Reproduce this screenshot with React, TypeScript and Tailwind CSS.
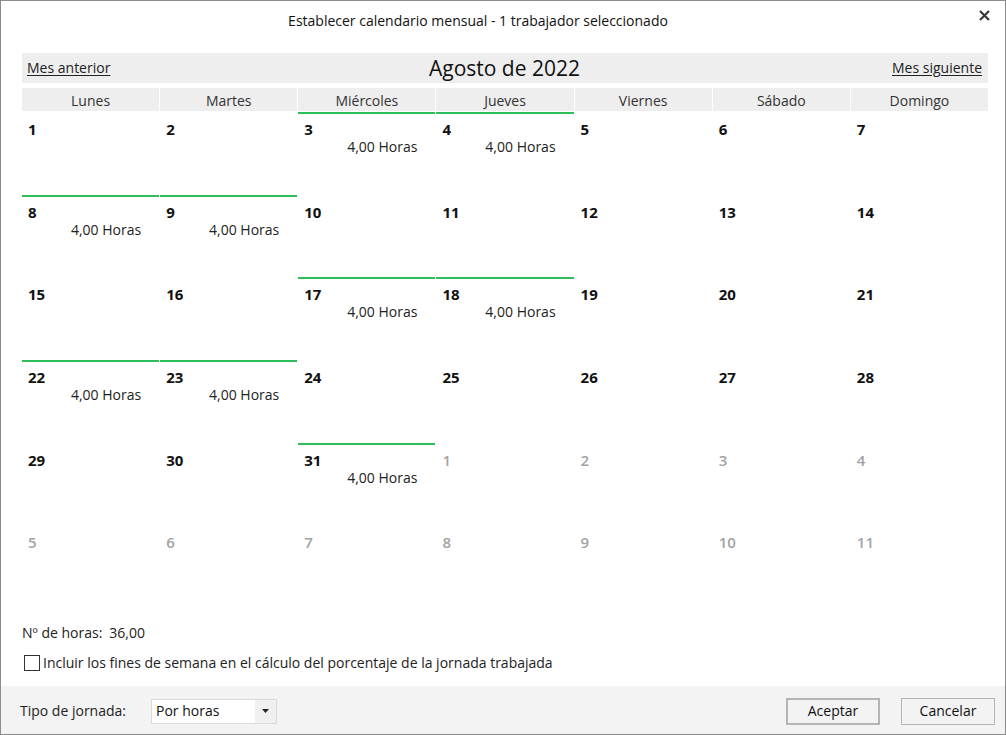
import React from "react";

const dayNames = ["Lunes", "Martes", "Miércoles", "Jueves", "Viernes", "Sábado", "Domingo"];

// August 2022 starts on Monday; 6 weeks shown
const hoursDays = [3, 4, 8, 9, 17, 18, 22, 23, 31];

type Cell = { day: number; current: boolean; hours?: string };

const buildCells = (): Cell[] => {
  const cells: Cell[] = [];
  for (let d = 1; d <= 31; d++) {
    cells.push({ day: d, current: true, hours: hoursDays.includes(d) ? "4,00 Horas" : undefined });
  }
  let next = 1;
  while (cells.length < 42) {
    cells.push({ day: next++, current: false });
  }
  return cells;
};

export default function App() {
  const cells = buildCells();

  return (
    <div
      className="w-[1006px] h-[735px] bg-white border border-[#8c8c8c] flex flex-col text-[#1a1a1a] overflow-hidden text-[14px] leading-[18px]"
      style={{ fontFamily: '"Open Sans", "Noto Sans", sans-serif' }}
    >
      {/* Title bar */}
      <div className="relative h-[39px] flex items-center justify-center pt-px pr-[50px]">
        <span className="text-[#111]">
          Establecer calendario mensual - 1 trabajador seleccionado
        </span>
        <svg className="absolute right-[15px] top-[9px]" width="11" height="11" viewBox="0 0 11 11">
          <path d="M1 1 L10 10 M10 1 L1 10" stroke="#3a3a3a" strokeWidth="2.2" />
        </svg>
      </div>

      <div className="flex flex-col pl-[21px] pr-[17px]">
        {/* Month navigation */}
        <div className="mt-[13px] h-[30px] bg-[#eeeeee] grid grid-cols-3 items-center pl-[5px] pr-[6px]">
          <span className="underline underline-offset-2 text-[#222]">Mes anterior</span>
          <span className="text-center text-[21px] leading-[26px] text-[#111]">Agosto de 2022</span>
          <span className="text-right underline underline-offset-2 text-[#222]">Mes siguiente</span>
        </div>

        {/* Day headers */}
        <div className="mt-[5px] grid grid-cols-7 gap-x-px">
          {dayNames.map((n) => (
            <div key={n} className="h-[23px] pt-[2px] bg-[#eeeeee] flex items-center justify-center text-[#333]">
              {n}
            </div>
          ))}
        </div>

        {/* Calendar grid */}
        <div className="mt-px grid grid-cols-7 gap-x-px auto-rows-[82.7px]">
          {cells.map((c, i) => (
            <div
              key={i}
              className={
                "flex flex-col border-t-2 " +
                (c.hours ? "border-[#2dbd5a]" : "border-transparent")
              }
            >
              <span
                className={
                  "pl-[6px] pt-[5px] text-[15px] leading-[20px] " +
                  (c.current ? "font-bold text-[#111]" : "font-semibold text-[#a3a3a3]")
                }
              >
                {c.day}
              </span>
              {c.hours && (
                <span className="self-end pr-[18px] -mt-px text-[#222]">
                  {c.hours}
                </span>
              )}
            </div>
          ))}
        </div>

        {/* Totals */}
        <div className="mt-[16px] text-[#222] flex gap-[7px]">
          <span>Nº de horas:</span>
          <span>36,00</span>
        </div>
        <label className="mt-[12px] ml-[2px] flex items-center gap-[3px] text-[#222]">
          <span className="w-[16px] h-[16px] border border-[#333] bg-white" />
          Incluir los fines de semana en el cálculo del porcentaje de la jornada trabajada
        </label>
      </div>

      {/* Footer */}
      <div className="mt-auto h-[48px] bg-[#f3f3f3] flex items-center pl-[19px] pr-[10px] pt-[2px]">
        <span className="text-[#222] w-[131px]">Tipo de jornada:</span>
        <div className="w-[126px] h-[25px] border border-[#dadada] bg-white flex items-center">
          <span className="flex-1 pl-[4px] text-[#111]">Por horas</span>
          <div className="w-[21px] h-full bg-[#f0f0f0] flex items-center justify-center">
            <svg width="7" height="4" viewBox="0 0 7 4">
              <path d="M0 0 H7 L3.5 4 Z" fill="#222" />
            </svg>
          </div>
        </div>
        <div className="ml-auto flex gap-[21px]">
          <button className="w-[94px] h-[27px] border-2 border-[#b4b4b4] bg-[#f3f3f3] text-[#111]">
            Aceptar
          </button>
          <button className="w-[94px] h-[27px] border border-[#b4b4b4] bg-[#f3f3f3] text-[#111]">
            Cancelar
          </button>
        </div>
      </div>
    </div>
  );
}
